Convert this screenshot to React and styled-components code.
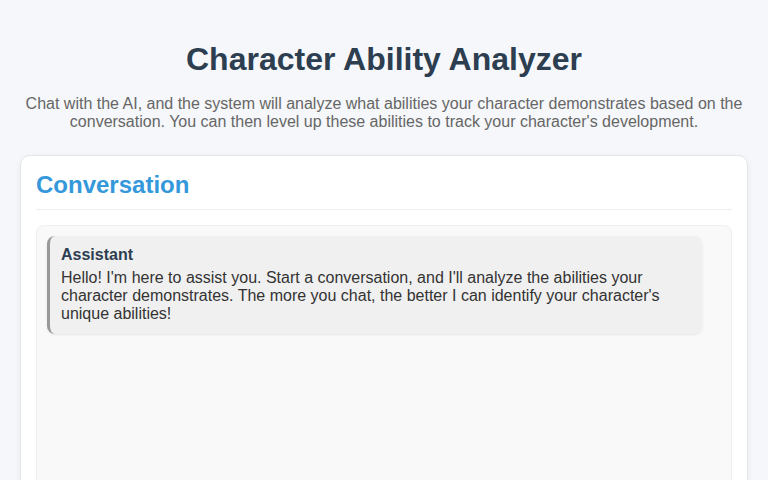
import React from "react";
import styled, { createGlobalStyle } from "styled-components";

const Global = createGlobalStyle`
  html, body { margin: 0; padding: 0; background: #f5f7fa; }
  body { font-family: "Liberation Sans", Arial, sans-serif; color: #333; }
  * { box-sizing: border-box; }
`;

const Page = styled.div`
  padding: 20px;
`;

const Title = styled.h1`
  margin: 21px 0 17px;
  font-size: 32px;
  font-weight: bold;
  color: #2c3e50;
  text-align: center;
`;

const Subtitle = styled.p`
  margin: 0 0 24px;
  font-size: 16px;
  line-height: 18px;
  color: #666;
  text-align: center;
`;

const Card = styled.section`
  background: #fff;
  border: 1px solid #e4e6ea;
  border-radius: 10px;
  box-shadow: 0 2px 6px rgba(0, 0, 0, 0.06);
  padding: 15px;
`;

const CardTitle = styled.h2`
  margin: 0 0 15px;
  padding-bottom: 10px;
  font-size: 24px;
  line-height: 28px;
  color: #3498db;
  border-bottom: 1px solid #eeeeee;
`;

const ChatBox = styled.div`
  background: #f9f9f9;
  border: 1px solid #eeeeee;
  border-radius: 8px;
  padding: 10px;
  min-height: 420px;
`;

const Bubble = styled.div`
  width: 655px;
  background: #f0f0f0;
  border-left: 3px solid #999;
  border-radius: 8px;
  padding: 10px 10px 11px 11px;
  box-shadow: 0 1px 3px rgba(0, 0, 0, 0.08);
`;

const Sender = styled.div`
  font-weight: bold;
  font-size: 16px;
  line-height: 18px;
  color: #2c3e50;
  margin-bottom: 5px;
`;

const Text = styled.div`
  font-size: 16px;
  line-height: 18px;
  color: #333;
`;

export default function App() {
  return (
    <>
      <Global />
      <Page>
        <Title>Character Ability Analyzer</Title>
        <Subtitle>
          Chat with the AI, and the system will analyze what abilities your character demonstrates based on the
          conversation. You can then level up these abilities to track your character's development.
        </Subtitle>
        <Card>
          <CardTitle>Conversation</CardTitle>
          <ChatBox>
            <Bubble>
              <Sender>Assistant</Sender>
              <Text>
                Hello! I'm here to assist you. Start a conversation, and I'll analyze the abilities your character
                demonstrates. The more you chat, the better I can identify your character's unique abilities!
              </Text>
            </Bubble>
          </ChatBox>
        </Card>
      </Page>
    </>
  );
}
